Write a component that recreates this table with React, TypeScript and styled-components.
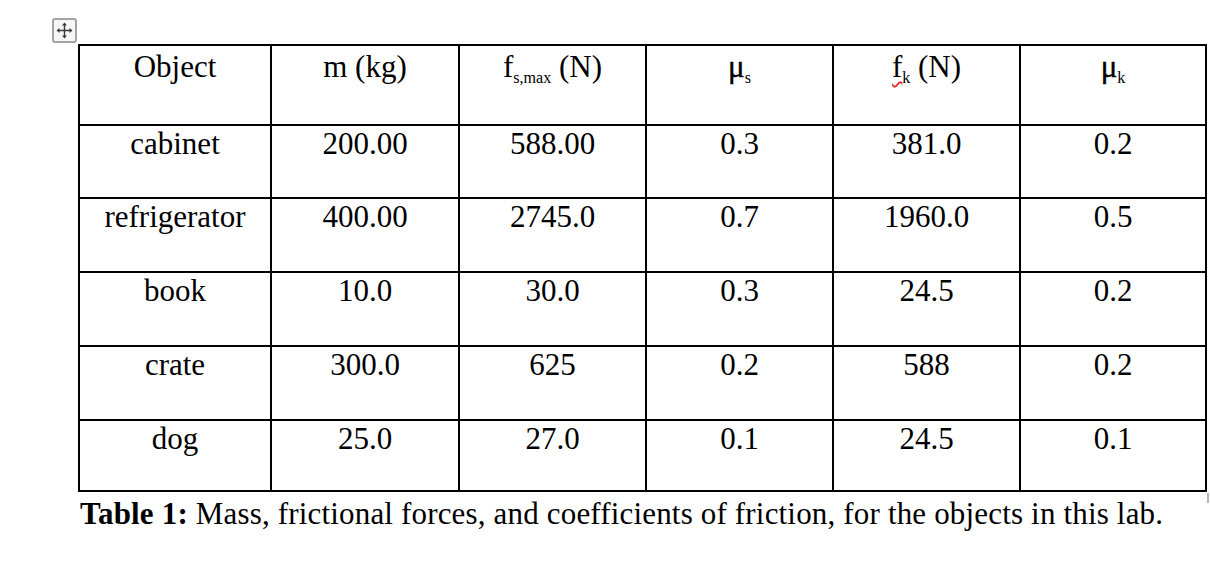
import React from "react";
import styled, {createGlobalStyle} from "styled-components";

const GlobalStyle = createGlobalStyle`
  html, body {
    margin: 0;
    padding: 0;
    background: #ffffff;
  }
  body {
    font-family: "Liberation Serif", "Times New Roman", serif;
    color: #000000;
  }
`;

const Page = styled.div`
  width: 1210px;
  height: 570px;
  padding: 44px 0 0 78px;
  box-sizing: border-box;
  overflow: hidden;
`;

const TableBox = styled.div`
  position: relative;
  width: 1128px;
`;

const MoveHandle = styled.div`
  position: absolute;
  left: -26px;
  top: -26px;
  width: 25px;
  height: 25px;
  box-sizing: border-box;
  border: 2px solid #a3a3a3;
  border-radius: 3px;
  background: #f6f6f6;
  display: flex;
  align-items: center;
  justify-content: center;
`;

const ResizeMark = styled.div`
  position: absolute;
  right: -3px;
  bottom: -11px;
  width: 2px;
  height: 10px;
  background: #b5b5b5;
`;

const Table = styled.table`
  border-collapse: collapse;
  table-layout: fixed;
  width: 1127px;
  font-size: 31px;
`;

const Row = styled.tr<{ $height: number }>`
  height: ${(p) => p.$height}px;
`;

const Cell = styled.td<{ $top?: number }>`
  border: 2px solid #000000;
  padding: ${(p) => p.$top ?? 1}px 4px 0;
  text-align: center;
  vertical-align: top;
  line-height: 1.12;
  white-space: nowrap;
`;

const Sub = styled.sub`
  font-size: 0.52em;
  vertical-align: -0.35em;
  line-height: 0;
`;

const Mu = styled.span`
  font-size: 1em;
  -webkit-text-stroke: 0.4px #000;
`;

const Misspelt = styled.span`
  text-decoration: underline wavy #e0322a;
  text-decoration-thickness: 2px;
  text-underline-offset: 4px;
`;

const Caption = styled.div`
  font-size: 31px;
  line-height: 1.12;
  padding: 5px 0 0 2px;
  letter-spacing: 0.17px;
`;

const Bold = styled.b`
  font-weight: bold;
`;

function MoveIcon() {
    return (
        <svg width="17" height="17" viewBox="0 0 17 17">
            <path d="M8.5 2.5 V14.5 M2.5 8.5 H14.5" stroke="#3a3a3a" strokeWidth="1.4"/>
            <polygon points="8.5,0.5 6,3.5 11,3.5" fill="#3a3a3a"/>
            <polygon points="8.5,16.5 6,13.5 11,13.5" fill="#3a3a3a"/>
            <polygon points="0.5,8.5 3.5,6 3.5,11" fill="#3a3a3a"/>
            <polygon points="16.5,8.5 13.5,6 13.5,11" fill="#3a3a3a"/>
        </svg>
    );
}

const widths = [192, 188, 187, 187, 187, 186];

const rows = [
    {name: "cabinet", m: "200.00", fs: "588.00", us: "0.3", fk: "381.0", uk: "0.2", h: 73},
    {name: "refrigerator", m: "400.00", fs: "2745.0", us: "0.7", fk: "1960.0", uk: "0.5", h: 74},
    {name: "book", m: "10.0", fs: "30.0", us: "0.3", fk: "24.5", uk: "0.2", h: 74},
    {name: "crate", m: "300.0", fs: "625", us: "0.2", fk: "588", uk: "0.2", h: 74},
    {name: "dog", m: "25.0", fs: "27.0", us: "0.1", fk: "24.5", uk: "0.1", h: 71},
];

export default function App() {
    return (
        <Page>
            <GlobalStyle/>
            <TableBox>
                <MoveHandle>
                    <MoveIcon/>
                </MoveHandle>
                <Table>
                    <colgroup>
                        {widths.map((w, i) => (
                            <col key={i} style={{width: w}}/>
                        ))}
                    </colgroup>
                    <tbody>
                    <Row $height={80}>
                        <Cell $top={4}>Object</Cell>
                        <Cell $top={4}>m (kg)</Cell>
                        <Cell $top={4}>f<Sub>s,max</Sub> (N)</Cell>
                        <Cell $top={4}><Mu>μ</Mu><Sub>s</Sub></Cell>
                        <Cell $top={4}><Misspelt>f<Sub>k</Sub></Misspelt> (N)</Cell>
                        <Cell $top={4}><Mu>μ</Mu><Sub>k</Sub></Cell>
                    </Row>
                    {rows.map((r) => (
                        <Row key={r.name} $height={r.h}>
                            <Cell>{r.name}</Cell>
                            <Cell>{r.m}</Cell>
                            <Cell>{r.fs}</Cell>
                            <Cell>{r.us}</Cell>
                            <Cell>{r.fk}</Cell>
                            <Cell>{r.uk}</Cell>
                        </Row>
                    ))}
                    </tbody>
                </Table>
                <ResizeMark/>
            </TableBox>
            <Caption>
                <Bold>Table 1:</Bold> Mass, frictional forces, and coefficients of friction, for the objects in this lab.
            </Caption>
        </Page>
    );
}
